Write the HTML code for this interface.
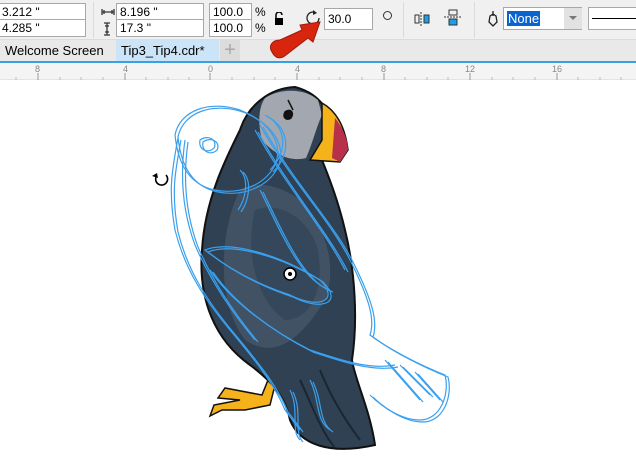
<!DOCTYPE html>
<html><head><meta charset="utf-8"><style>
*{margin:0;padding:0;box-sizing:border-box}
body{width:636px;height:464px;overflow:hidden;background:#fff;font-family:"Liberation Sans",sans-serif;position:relative}
.tb{position:absolute;left:0;top:0;width:636px;height:40px;background:#f0f0f0;border-bottom:1px solid #dcdcdc}
.in{position:absolute;background:#fff;border:1px solid #a8a8a8;height:18px;font-size:12px;line-height:16px;padding-left:3px;color:#000}
.t{position:absolute;font-size:12px;color:#000}
.sep{position:absolute;top:2px;width:1px;height:36px;background:#dadada}
.tabs{position:absolute;left:0;top:40px;width:636px;height:21px;background:#e9e9e9}
.tab{position:absolute;top:0;height:21px;font-size:13px;line-height:21px;padding-left:5px}
.rul{position:absolute;left:0;top:61px;width:636px;height:19px;background:#f4f4f4;border-top:2px solid #3aa0e6;border-bottom:1px solid #e4e4e4}
.rl{position:absolute;top:1px;font-size:9px;color:#888}
</style></head><body>
<div class="tb">
 <div class="in" style="left:-2px;top:3px;width:88px">3.212 "</div>
 <div class="in" style="left:-2px;top:19px;width:88px">4.285 "</div>
 <div class="sep" style="left:93px"></div>
 <svg style="position:absolute;left:101px;top:8px" width="14" height="8"><path d="M1 4h12M1 1v6M13 1v6M3 2v4M11 2v4" stroke="#333" stroke-width="1.3" fill="none"/></svg>
 <svg style="position:absolute;left:103px;top:22px" width="8" height="14"><path d="M4 1v12M1 1h6M1 13h6M2 4h4M2 10h4" stroke="#333" stroke-width="1.3" fill="none"/></svg>
 <div class="in" style="left:116px;top:3px;width:88px">8.196 "</div>
 <div class="in" style="left:116px;top:19px;width:88px">17.3 "</div>
 <div class="in" style="left:209px;top:3px;width:43px">100.0</div>
 <div class="in" style="left:209px;top:19px;width:43px">100.0</div>
 <div class="t" style="left:255px;top:5px">%</div>
 <div class="t" style="left:255px;top:21px">%</div>
 <svg style="position:absolute;left:274px;top:12px" width="10" height="14"><path d="M2 6V3a3 3 0 0 1 6 0" stroke="#000" stroke-width="1.5" fill="none"/><rect x="1" y="6" width="8" height="7" fill="#000"/></svg>
 <svg style="position:absolute;left:305px;top:9px" width="18" height="18"><path d="M14 9a6 6 0 1 1-3-5.2" stroke="#222" stroke-width="1.3" fill="none"/><path d="M8 1l4 3-4 2z" fill="#222"/></svg>
 <div class="in" style="left:324px;top:8px;width:49px;height:22px;line-height:20px">30.0</div>
 <div style="position:absolute;left:383px;top:11px;width:9px;height:9px;border:1.3px solid #333;border-radius:50%"></div>
 <div class="sep" style="left:403px"></div>
 <svg style="position:absolute;left:414px;top:12px" width="18" height="14"><path d="M1 3h4v8H1z" stroke="#333" fill="none"/><path d="M7 0v14" stroke="#333" stroke-dasharray="2 1"/><rect x="10" y="3" width="5" height="8" fill="#1aa0e8" stroke="#333"/></svg>
 <svg style="position:absolute;left:444px;top:9px" width="18" height="18"><path d="M5 1h8v5H5z" stroke="#333" fill="none"/><path d="M0 8h18" stroke="#333" stroke-dasharray="2 1"/><rect x="5" y="10" width="8" height="6" fill="#1aa0e8" stroke="#333"/></svg>
 <div class="sep" style="left:474px"></div>
 <svg style="position:absolute;left:487px;top:10px" width="12" height="18"><path d="M6 1v5M3 6l3-2 3 2 1 6-4 4-4-4z" stroke="#222" stroke-width="1.3" fill="none"/></svg>
 <div class="in" style="left:503px;top:7px;width:79px;height:23px;background:#fff;padding:3px 0 0 3px"><span style="background:#0a64d0;color:#fff;font-size:13px;padding:0 1px">None</span></div>
 <div style="position:absolute;left:564px;top:8px;width:18px;height:21px;background:#e2e2e2"><div style="margin:8px 0 0 5px;width:0;height:0;border-left:4px solid transparent;border-right:4px solid transparent;border-top:4px solid #777"></div></div>
 <div class="in" style="left:588px;top:7px;width:60px;height:23px"><div style="margin-top:10px;height:1px;background:#000"></div></div>
</div>
<div class="tabs">
 <div class="tab" style="left:0;width:115px">Welcome Screen</div>
 <div class="tab" style="left:116px;width:103px;background:#cce4f7">Tip3_Tip4.cdr*</div>
 <div style="position:absolute;left:220px;top:0;width:20px;height:21px;background:#dcdcdc;color:#a8a8a8;font-size:20px;line-height:20px;text-align:center">+</div>
</div>
<div class="rul">
 <span class="rl" style="left:35px">8</span><span class="rl" style="left:123px">4</span><span class="rl" style="left:208px">0</span><span class="rl" style="left:295px">4</span><span class="rl" style="left:381px">8</span><span class="rl" style="left:465px">12</span><span class="rl" style="left:552px">16</span>
 <svg style="position:absolute;left:0;top:10px" width="636" height="7"><g stroke="#999"><path d="M38 0v7M125 0v7M210 0v7M297 0v7M384 0v7M470 0v7M557 0v7"/></g><g stroke="#bbb"><path d="M16 4v3M60 4v3M81 4v3M103 4v3M146 4v3M168 4v3M189 4v3M232 4v3M254 4v3M275 4v3M319 4v3M340 4v3M362 4v3M405 4v3M427 4v3M448 4v3M492 4v3M513 4v3M535 4v3M578 4v3M600 4v3M621 4v3"/></g></svg>
</div>
<svg style="position:absolute;left:0;top:0" width="636" height="464">
 <defs>
 <g id="bl">
  <path d="M175 135 C180 110 210 100 240 110 C265 120 285 140 275 165 C265 185 240 195 215 190 C190 185 178 165 175 135z"/>
  <path d="M178 138 C172 170 168 190 175 230 C185 270 205 300 230 330 C255 360 275 385 285 410 L300 430"/>
  <path d="M185 140 C180 175 182 210 195 245 C210 280 230 310 255 340"/>
  <path d="M260 125 C290 180 330 220 350 260 C370 300 375 320 370 335 C390 350 420 365 445 375 C450 395 440 420 420 420 C400 420 380 405 370 395"/>
  <path d="M255 130 C285 185 325 230 345 270"/>
  <path d="M205 250 C230 240 280 255 320 280 C340 300 320 310 290 295 C260 285 230 270 205 250z"/>
  <path d="M210 270 C230 300 270 330 310 350 C340 360 370 370 395 365"/>
  <path d="M260 190 C280 230 300 280 330 290"/>
  <path d="M290 390 C300 410 290 430 300 440 M310 380 C320 400 315 420 330 430"/>
  <path d="M385 360 L420 400 M400 365 L430 395 M415 372 L440 400"/>
  <path d="M200 140 c8-6 18 0 14 8 c-6 6-16 2-14-8z"/>
  <path d="M265 115 C285 125 290 150 270 170 M240 170 C250 180 245 200 238 210"/>
 </g>
 </defs>
 <!-- feet -->
 <path d="M268 380 L262 395 L225 388 L218 398 L240 400 L214 405 L210 416 L222 410 L245 410 L270 405 L275 385z" fill="#f5b21a" stroke="#111" stroke-width="1.5"/>
 <!-- body -->
 <path d="M295 87 C270 88 248 105 240 130 C225 160 205 200 202 250 C198 300 215 340 250 365 C270 380 285 395 290 420 C300 445 330 455 375 445 C370 410 355 380 352 360 C358 320 355 270 345 230 C338 200 328 175 322 160 L330 140 C335 120 325 95 295 87z" fill="#2f4153" stroke="#111" stroke-width="2"/>
 <path d="M240 190 C220 230 215 300 245 340 C275 360 300 340 325 300 C340 260 320 220 300 200 C280 185 255 180 240 190z" fill="#46566a" opacity="0.8"/>
 <path d="M255 210 C245 250 255 300 285 320 C310 320 325 290 318 250 C310 220 280 200 255 210z" fill="#34475b"/>
 <path d="M300 380 C310 400 320 430 335 448 M320 370 C330 395 345 420 360 440" stroke="#1b2633" stroke-width="2" fill="none"/>
 <!-- face -->
 <path d="M265 98 C280 88 305 88 318 100 L322 115 C316 128 312 145 306 158 C290 162 275 155 262 140 C258 125 258 108 265 98z" fill="#a3a7b0"/>
 <path d="M285 112 c5-4 10 0 6 6 c-4 3-9 0-6-6z M288 100 l5 10" stroke="#111" stroke-width="1.5" fill="#111"/>
 <!-- beak -->
 <path d="M322 103 C335 110 345 125 348 150 L340 162 L310 160 L322 140z" fill="#f5b21a" stroke="#111" stroke-width="1.5"/>
 <path d="M335 118 C343 128 348 140 348 150 L340 162 L332 158z" fill="#b8304a"/>
 <!-- blue outline -->
 <g stroke="#3aa0ee" stroke-width="1.2" fill="none">
  <use href="#bl"/>
  <use href="#bl" transform="translate(3,2)"/>
 </g>
 <!-- rotate handle -->
 <path d="M166 175 a6 6 0 1 1-10 2" stroke="#000" stroke-width="1.6" fill="none"/>
 <path d="M152 176 l5-3 1 5z" fill="#000"/>
 <!-- center -->
 <circle cx="290" cy="274" r="6" fill="#fff" stroke="#000" stroke-width="1.5"/><circle cx="290" cy="274" r="2" fill="#000"/>
 <!-- arrow -->
 <path d="M272 52 C268 46 272 40 280 40 L302 30 L300 25 L320 22 L313 42 L308 38 L286 55 C280 60 275 58 272 52z" fill="#d8250e" stroke="#a01a08" stroke-width="1"/>
</svg>
</body></html>
